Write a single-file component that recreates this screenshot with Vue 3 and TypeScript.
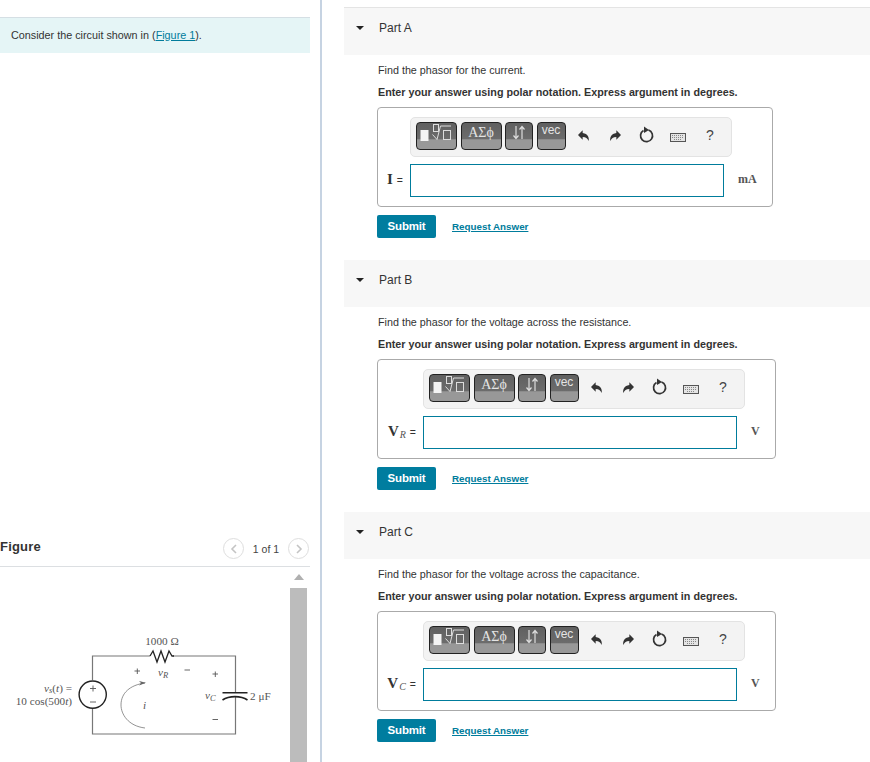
<script setup lang="ts">
interface Part {
  title: string
  prompt: string
  sym: string
  sub: string
  unit: string
  wide: boolean
}
const parts: Part[] = [
  { title: 'Part A', prompt: 'Find the phasor for the current.', sym: 'I', sub: '', unit: 'mA', wide: false },
  { title: 'Part B', prompt: 'Find the phasor for the voltage across the resistance.', sym: 'V', sub: 'R', unit: 'V', wide: true },
  { title: 'Part C', prompt: 'Find the phasor for the voltage across the capacitance.', sym: 'V', sub: 'C', unit: 'V', wide: true },
]
</script>

<template>
  <div class="page">
    <aside class="left">
      <div class="intro">
        Consider the circuit shown in (<a class="link" href="#">Figure 1</a>).
      </div>
      <section class="figure">
        <header class="fig-head">
          <span class="fig-title">Figure</span>
          <div class="pager">
            <span class="pg-btn">
              <svg width="8" height="10" viewBox="0 0 8 10"><path d="M6 1 2 5l4 4" fill="none" stroke="#c4c4c4" stroke-width="1.6" /></svg>
            </span>
            <span class="pg-text">1 of 1</span>
            <span class="pg-btn">
              <svg width="8" height="10" viewBox="0 0 8 10"><path d="M2 1l4 4-4 4" fill="none" stroke="#c4c4c4" stroke-width="1.6" /></svg>
            </span>
          </div>
        </header>
        <div class="fig-body">
          <svg class="circuit" width="290" height="194" viewBox="0 568 290 194">
            <g fill="none" stroke="#777" stroke-width="1.2">
              <path d="M150 657H92.5V681M92.5 710V735H235.5V697M235.5 693.5V657H173" />
              <path d="M145 729C128 727 121 715 121 706C121 694 130 686 145 684" stroke-width="0.8" />
            </g>
            <path d="M139 682 146 683.8 139 686.5 141 684Z" fill="#666" />
            <path d="M150 657 153 652 157 663 161 652 165 663 169 652 172 657H174" fill="none" stroke="#222" stroke-width="1.3" />
            <circle cx="92.7" cy="695.6" r="13.6" fill="#fff" stroke="#222" stroke-width="1.4" />
            <path d="M222.5 693.7H247.5M222.5 701C229 696.5 241 696.5 247.5 701" fill="none" stroke="#222" stroke-width="1.6" />
            <g class="sign" stroke="#555" stroke-width="0.9">
              <path d="M90 689.5H96M93 686.5V692.5M90 703H96" />
              <path d="M134.5 672H140M137.3 669.5V675M184.5 671H190M212.5 675H218M215.3 672.5V678M212.5 720.5H218" />
            </g>
            <g class="ckt">
              <text x="162" y="646" text-anchor="middle">1000 Ω</text>
              <text x="158" y="677"><tspan class="it">v</tspan><tspan class="it sm" dy="2">R</tspan></text>
              <text x="205" y="700"><tspan class="it">v</tspan><tspan class="it sm" dy="2">C</tspan></text>
              <text x="250" y="701">2 μF</text>
              <text x="143" y="710" class="it">i</text>
              <text x="72" y="692.500" text-anchor="end"><tspan class="it">v</tspan><tspan class="it sm" dy="1.500">s</tspan><tspan dy="-1.500">(</tspan><tspan class="it">t</tspan>) =</text>
              <text x="72" y="706" text-anchor="end">10 cos(500<tspan class="it">t</tspan>)</text>
            </g>
          </svg>
          <div class="scrollbar">
            <span class="sb-arrow"></span>
            <span class="sb-thumb"></span>
          </div>
        </div>
      </section>
    </aside>

    <main class="right">
      <section v-for="p in parts" :key="p.title" class="part">
        <header class="part-head">
          <span class="caret"></span>
          <span class="part-title">{{ p.title }}</span>
        </header>
        <div class="part-body">
          <p class="prompt">{{ p.prompt }}</p>
          <p class="instr">Enter your answer using polar notation. Express argument in degrees.</p>
          <div class="answer" :class="{ wide: p.wide }">
            <div class="toolbar">
              <div class="tool t1">
                <svg width="38" height="25" viewBox="0 0 38 25">
                  <rect x="2.500" y="7" width="8" height="11" fill="#f4f4f4" />
                  <rect x="15.500" y="1.500" width="5" height="7" fill="none" stroke="#ddd" />
                  <path d="M14.500 11.500 19 16.500 22.500 3H33" fill="none" stroke="#ddd" />
                  <rect x="25.500" y="7.500" width="7" height="9" fill="none" stroke="#ddd" />
                </svg>
              </div>
              <div class="tool t2">ΑΣϕ</div>
              <div class="tool t3">
                <svg width="16" height="16" viewBox="0 0 16 16">
                  <path d="M5 1V13M2.500 10.500 5 13.500 7.500 10.500M11 14V2M8.500 4.500 11 1.500 13.500 4.500" fill="none" stroke="#ddd" stroke-width="1.2" />
                </svg>
              </div>
              <div class="tool t4">vec</div>
              <span class="act a-undo">
                <svg width="16" height="16" viewBox="0 0 24 24"><path d="M10 9V5l-7 7 7 7v-4.100c5 0 7 1.600 9 6.100 1-5-1-11-9-12z" fill="#333" /></svg>
              </span>
              <span class="act a-redo">
                <svg width="16" height="16" viewBox="0 0 24 24"><path d="M14 9V5l7 7-7 7v-4.100c-5 0-7 1.600-9 6.100-1-5 1-11 9-12z" fill="#333" /></svg>
              </span>
              <span class="act a-reset">
                <svg width="16" height="18" viewBox="0 0 16 18">
                  <path d="M9.500 4A6 6 0 1 1 4.500 4.500" fill="none" stroke="#333" stroke-width="1.7" />
                  <path d="M5 0.500 10 4 5 7Z" fill="#333" />
                </svg>
              </span>
              <span class="act a-keys">
                <svg width="16" height="9" viewBox="0 0 16 9">
                  <rect x="0.500" y="0.500" width="15" height="8" fill="#e4e4e4" stroke="#555" />
                  <path d="M2 2.500H14M2 4.500H14M4 6.500H12" stroke="#888" stroke-dasharray="1 1" />
                </svg>
              </span>
              <span class="act a-help">?</span>
            </div>
            <div class="row">
              <span class="label"><b class="sym">{{ p.sym }}</b><i v-if="p.sub" class="sub">{{ p.sub }}</i><span class="eq">=</span></span>
              <div class="input"></div>
              <span class="unit">{{ p.unit }}</span>
            </div>
          </div>
          <div class="actions">
            <span class="submit">Submit</span>
            <a class="request" href="#">Request Answer</a>
          </div>
        </div>
      </section>
    </main>
  </div>
</template>

<style>
html, body { margin: 0; background: #fff; overflow: hidden; }
</style>

<style scoped>
.page {
  display: flex;
  width: 870px;
  height: 762px;
  overflow: hidden;
  font-family: "Liberation Sans", Arial, sans-serif;
  color: #333;
}
.left {
  flex: 0 0 322px;
  box-sizing: border-box;
  border-right: 2px solid #c6d3e2;
  display: flex;
  flex-direction: column;
  padding: 17px 10px 0 0;
}
.intro {
  box-sizing: border-box;
  height: 36px;
  padding: 0 0 0 11px;
  line-height: 35px;
  font-size: 10.800px;
  background: #e5f5f6;
  border-top: 1px solid #d5dfe4;
}
.link { color: #007c9c; text-decoration: underline; }
.figure { margin-top: 484px; flex: 1; display: flex; flex-direction: column; min-height: 0; }
.fig-head {
  height: 30px;
  box-sizing: border-box;
  display: flex;
  align-items: center;
  justify-content: space-between;
  border-bottom: 1px solid #dcdfe2;
  padding-bottom: 6px;
}
.fig-title { font-size: 13px; font-weight: 700; color: #333; letter-spacing: 0.2px; padding-bottom: 4px; }
.pager { display: flex; align-items: center; gap: 7px; padding-right: 1px; }
.pg-btn {
  box-sizing: border-box;
  width: 21px;
  height: 21px;
  border: 1px solid #dedede;
  border-radius: 50%;
  display: flex;
  align-items: center;
  justify-content: center;
}
.pg-text { font-size: 10.500px; width: 30px; text-align: center; color: #444; }
.fig-body { flex: 1; display: flex; min-height: 0; }
.circuit { flex: 0 0 290px; display: block; }
.ckt text { font-family: "Liberation Serif", serif; font-size: 11.200px; fill: #555; }
.ckt .it { font-style: italic; }
.ckt .sm { font-size: 8.500px; }
.scrollbar { width: 17px; display: flex; flex-direction: column; align-items: center; }
.sb-arrow {
  margin-top: 7px;
  width: 0;
  height: 0;
  border-left: 5px solid transparent;
  border-right: 5px solid transparent;
  border-bottom: 6px solid #b0b0b0;
}
.sb-thumb { margin-top: 8px; width: 17px; flex: 1; background: #bcbcbc; }

.right { flex: 1; min-width: 0; padding: 7px 0 0 22px; }
.part { height: 252px; }
.part-head {
  box-sizing: border-box;
  height: 48px;
  display: flex;
  align-items: center;
  background: #f7f7f7;
  background-clip: padding-box;
  border-top: 1px solid #e4e4e4;
  padding-bottom: 8px;
}
.part + .part .part-head { border-top-color: #fff; }
.caret {
  margin-left: 12px;
  width: 0;
  height: 0;
  border-left: 4px solid transparent;
  border-right: 4px solid transparent;
  border-top: 4px solid #222;
}
.part-title { margin-left: 15px; font-size: 12px; color: #333; }
.part-body { padding: 9px 0 0 33px; }
.prompt { margin: 0; padding-left: 1px; font-size: 10.750px; line-height: 13px; }
.instr { margin: 9px 0 0; padding-left: 1px; font-size: 10.750px; font-weight: 700; line-height: 13px; }
.answer {
  box-sizing: border-box;
  margin-top: 8px;
  width: 396px;
  height: 100px;
  border: 1px solid #aaa;
  border-radius: 4px;
  padding-top: 9px;
  --lead: 32px;
}
.answer.wide { width: 399px; --lead: 45px; }
.toolbar {
  box-sizing: border-box;
  position: relative;
  margin-left: var(--lead);
  width: 322px;
  height: 40px;
  background: #f3f3f3;
  border: 1px solid #e3e3e3;
  border-radius: 5px;
  display: flex;
  gap: 3.500px;
  padding: 4px 0 0 5px;
}
.tool {
  box-sizing: border-box;
  height: 28px;
  border: 1.500px solid #222;
  border-radius: 4px;
  background: linear-gradient(#606060 0, #6c6c6c 62%, #989898 64%, #989898 100%);
  color: #e4e4e4;
  display: flex;
  justify-content: center;
  overflow: hidden;
}
.t1 { width: 41px; }
.t2 { width: 41px; font-family: "Liberation Serif", serif; font-size: 14px; line-height: 20px; }
.t3 { width: 28px; padding-top: 2px; }
.t4 { width: 29px; font-size: 12px; line-height: 15px; }
.act { position: absolute; top: 0; display: flex; height: 34px; align-items: center; justify-content: center; width: 18px; }
.a-undo { left: 164px; }
.a-redo { left: 195px; }
.a-reset { left: 227px; }
.a-keys { left: 258px; padding-top: 4px; box-sizing: border-box; }
.a-help { left: 290px; font-size: 14px; color: #444; }
.row { display: flex; align-items: center; margin-top: 7px; }
.label {
  box-sizing: border-box;
  width: var(--lead);
  padding-right: 7px;
  text-align: right;
  font-size: 11px;
  white-space: nowrap;
  margin-top: -2px;
}
.sym { font-family: "Liberation Serif", serif; font-size: 15px; font-weight: 700; }
.sub { font-family: "Liberation Serif", serif; font-size: 10px; color: #555; margin-left: 1px; position: relative; top: 2px; }
.eq { margin-left: 4px; font-size: 10.500px; }
.input {
  box-sizing: border-box;
  width: 314px;
  height: 33px;
  border: 1px solid #007c9c;
  background: #fff;
}
.unit {
  flex: 1;
  padding-left: 14px;
  font-family: "Liberation Serif", serif;
  font-weight: 700;
  font-size: 12px;
  color: #555;
  margin-top: -3px;
}
.actions { display: flex; align-items: center; margin-top: 8px; }
.submit {
  width: 59px;
  height: 23px;
  background: #007d9f;
  border-radius: 2px;
  color: #fff;
  font-size: 11.500px;
  font-weight: 700;
  line-height: 22px;
  text-align: center;
  letter-spacing: -0.2px;
}
.request {
  margin-left: 16px;
  margin-bottom: 1px;
  font-size: 9.800px;
  font-weight: 700;
  color: #007c9c;
  text-decoration: underline;
}
</style>
